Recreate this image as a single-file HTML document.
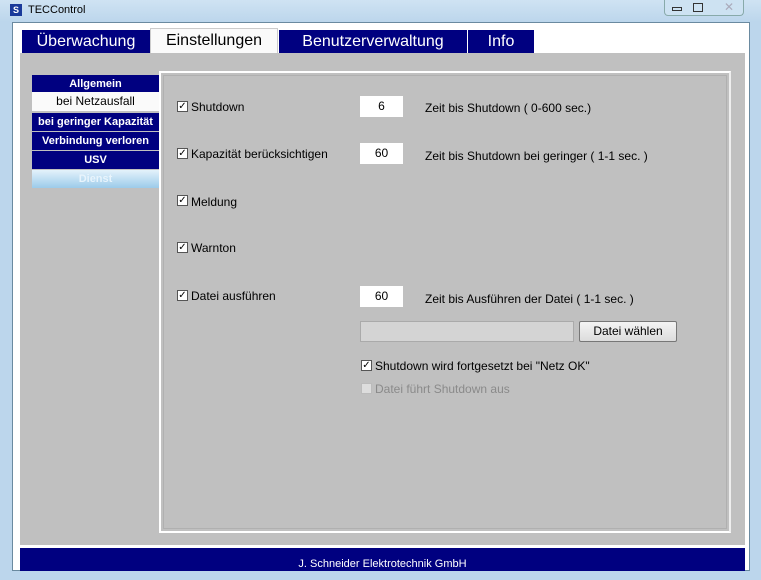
<!DOCTYPE html>
<html><head><meta charset="utf-8"><style>
*{margin:0;padding:0;box-sizing:border-box}
body{width:761px;height:571px;overflow:hidden;background:#bcd6ec;font-family:"Liberation Sans",sans-serif;position:relative}
.a{position:absolute}
.tab{position:absolute;top:30px;height:23px;background:#000080;color:#fff;font-size:16px;text-align:center;line-height:24px}
.li{position:absolute;left:32px;width:127px;height:18px;background:#000080;color:#fff;font-size:11px;text-align:center;line-height:18px;font-weight:bold}
.cb{position:absolute;width:11px;height:11px;border:1px solid #555;background:#fff;font-size:10px;line-height:9px;text-align:center;color:#000}
.lb{position:absolute;font-size:12px;color:#000}
.inp{position:absolute;width:43px;height:21px;background:#fff;font-size:12px;text-align:center;line-height:21px}
</style></head><body>
<div class="a" style="left:0;top:0;width:761px;height:22px;background:linear-gradient(#cfe3f3,#bcd6ec)"></div>
<div class="a" style="left:10px;top:4px;width:12px;height:12px;background:#1a3a9a;color:#fff;font-size:9px;line-height:12px;text-align:center;font-weight:bold">S</div>
<div class="a" style="left:28px;top:4px;font-size:11px;color:#000">TECControl</div>
<div class="a" style="left:664px;top:0;width:80px;height:16px;border:1px solid #8aa;border-top:none;border-radius:0 0 4px 4px;background:#cde2f2"></div>
<div class="a" style="left:672px;top:7px;width:10px;height:4px;border:1px solid #333"></div>
<div class="a" style="left:693px;top:3px;width:10px;height:9px;border:1px solid #333"></div>
<div class="a" style="left:724px;top:0px;font-size:12px;color:#aab">✕</div>
<div class="a" style="left:12px;top:22px;width:738px;height:549px;background:#fff;border:1px solid #6a8aa0"></div>
<div class="a" style="left:20px;top:53px;width:725px;height:492px;background:#c0c0c0"></div>
<div class="tab" style="left:22px;width:128px">Überwachung</div>
<div class="tab" style="left:150px;top:28px;height:25px;width:128px;background:#fafafa;color:#000;border:1px solid #ccc;border-bottom:none">Einstellungen</div>
<div class="tab" style="left:279px;width:188px">Benutzerverwaltung</div>
<div class="tab" style="left:468px;width:66px">Info</div>
<div class="li" style="top:75px">Allgemein</div>
<div class="li" style="top:92px;height:19px;background:#fafafa;color:#000;font-weight:normal;font-size:12px">bei Netzausfall</div>
<div class="li" style="top:113px">bei geringer Kapazität</div>
<div class="li" style="top:132px">Verbindung verloren</div>
<div class="li" style="top:151px">USV</div>
<div class="li" style="top:170px;background:linear-gradient(#e4f2fb,#9ccbea);color:#e8f4fc">Dienst</div>
<div class="a" style="left:159px;top:71px;width:572px;height:462px;border:2px solid #fff;border-right-color:#eee;border-bottom-color:#fff;background:#c0c0c0"></div>
<div class="a" style="left:163px;top:75px;width:564px;height:454px;border:1px solid #b0b0b0"></div>

<div class="cb" style="left:177px;top:101px">✓</div><div class="lb" style="left:191px;top:100px">Shutdown</div>
<div class="inp" style="left:360px;top:96px">6</div><div class="lb" style="left:425px;top:101px">Zeit bis Shutdown ( 0-600 sec.)</div>
<div class="cb" style="left:177px;top:148px">✓</div><div class="lb" style="left:191px;top:147px">Kapazität berücksichtigen</div>
<div class="inp" style="left:360px;top:143px">60</div><div class="lb" style="left:425px;top:149px">Zeit bis Shutdown bei geringer ( 1-1 sec. )</div>
<div class="cb" style="left:177px;top:195px">✓</div><div class="lb" style="left:191px;top:195px">Meldung</div>
<div class="cb" style="left:177px;top:242px">✓</div><div class="lb" style="left:191px;top:241px">Warnton</div>
<div class="cb" style="left:177px;top:290px">✓</div><div class="lb" style="left:191px;top:289px">Datei ausführen</div>
<div class="inp" style="left:360px;top:286px">60</div><div class="lb" style="left:425px;top:292px">Zeit bis Ausführen der Datei ( 1-1 sec. )</div>
<div class="a" style="left:360px;top:321px;width:214px;height:21px;background:#d4d4d4;border:1px solid #aaa"></div>
<div class="a" style="left:579px;top:321px;width:98px;height:21px;background:linear-gradient(#f4f4f4,#dcdcdc);border:1px solid #777;border-radius:2px;font-size:12px;text-align:center;line-height:19px">Datei wählen</div>
<div class="cb" style="left:361px;top:360px">✓</div><div class="lb" style="left:375px;top:359px">Shutdown wird fortgesetzt bei "Netz OK"</div>
<div class="cb" style="left:361px;top:383px;border-color:#bbb;background:#ddd"></div><div class="lb" style="left:375px;top:382px;color:#8a8a8a">Datei führt Shutdown aus</div>

<div class="a" style="left:20px;top:548px;width:725px;height:23px;background:#000080;color:#fff;font-size:11px;text-align:center;line-height:32px">J. Schneider Elektrotechnik GmbH</div>
</body></html>
